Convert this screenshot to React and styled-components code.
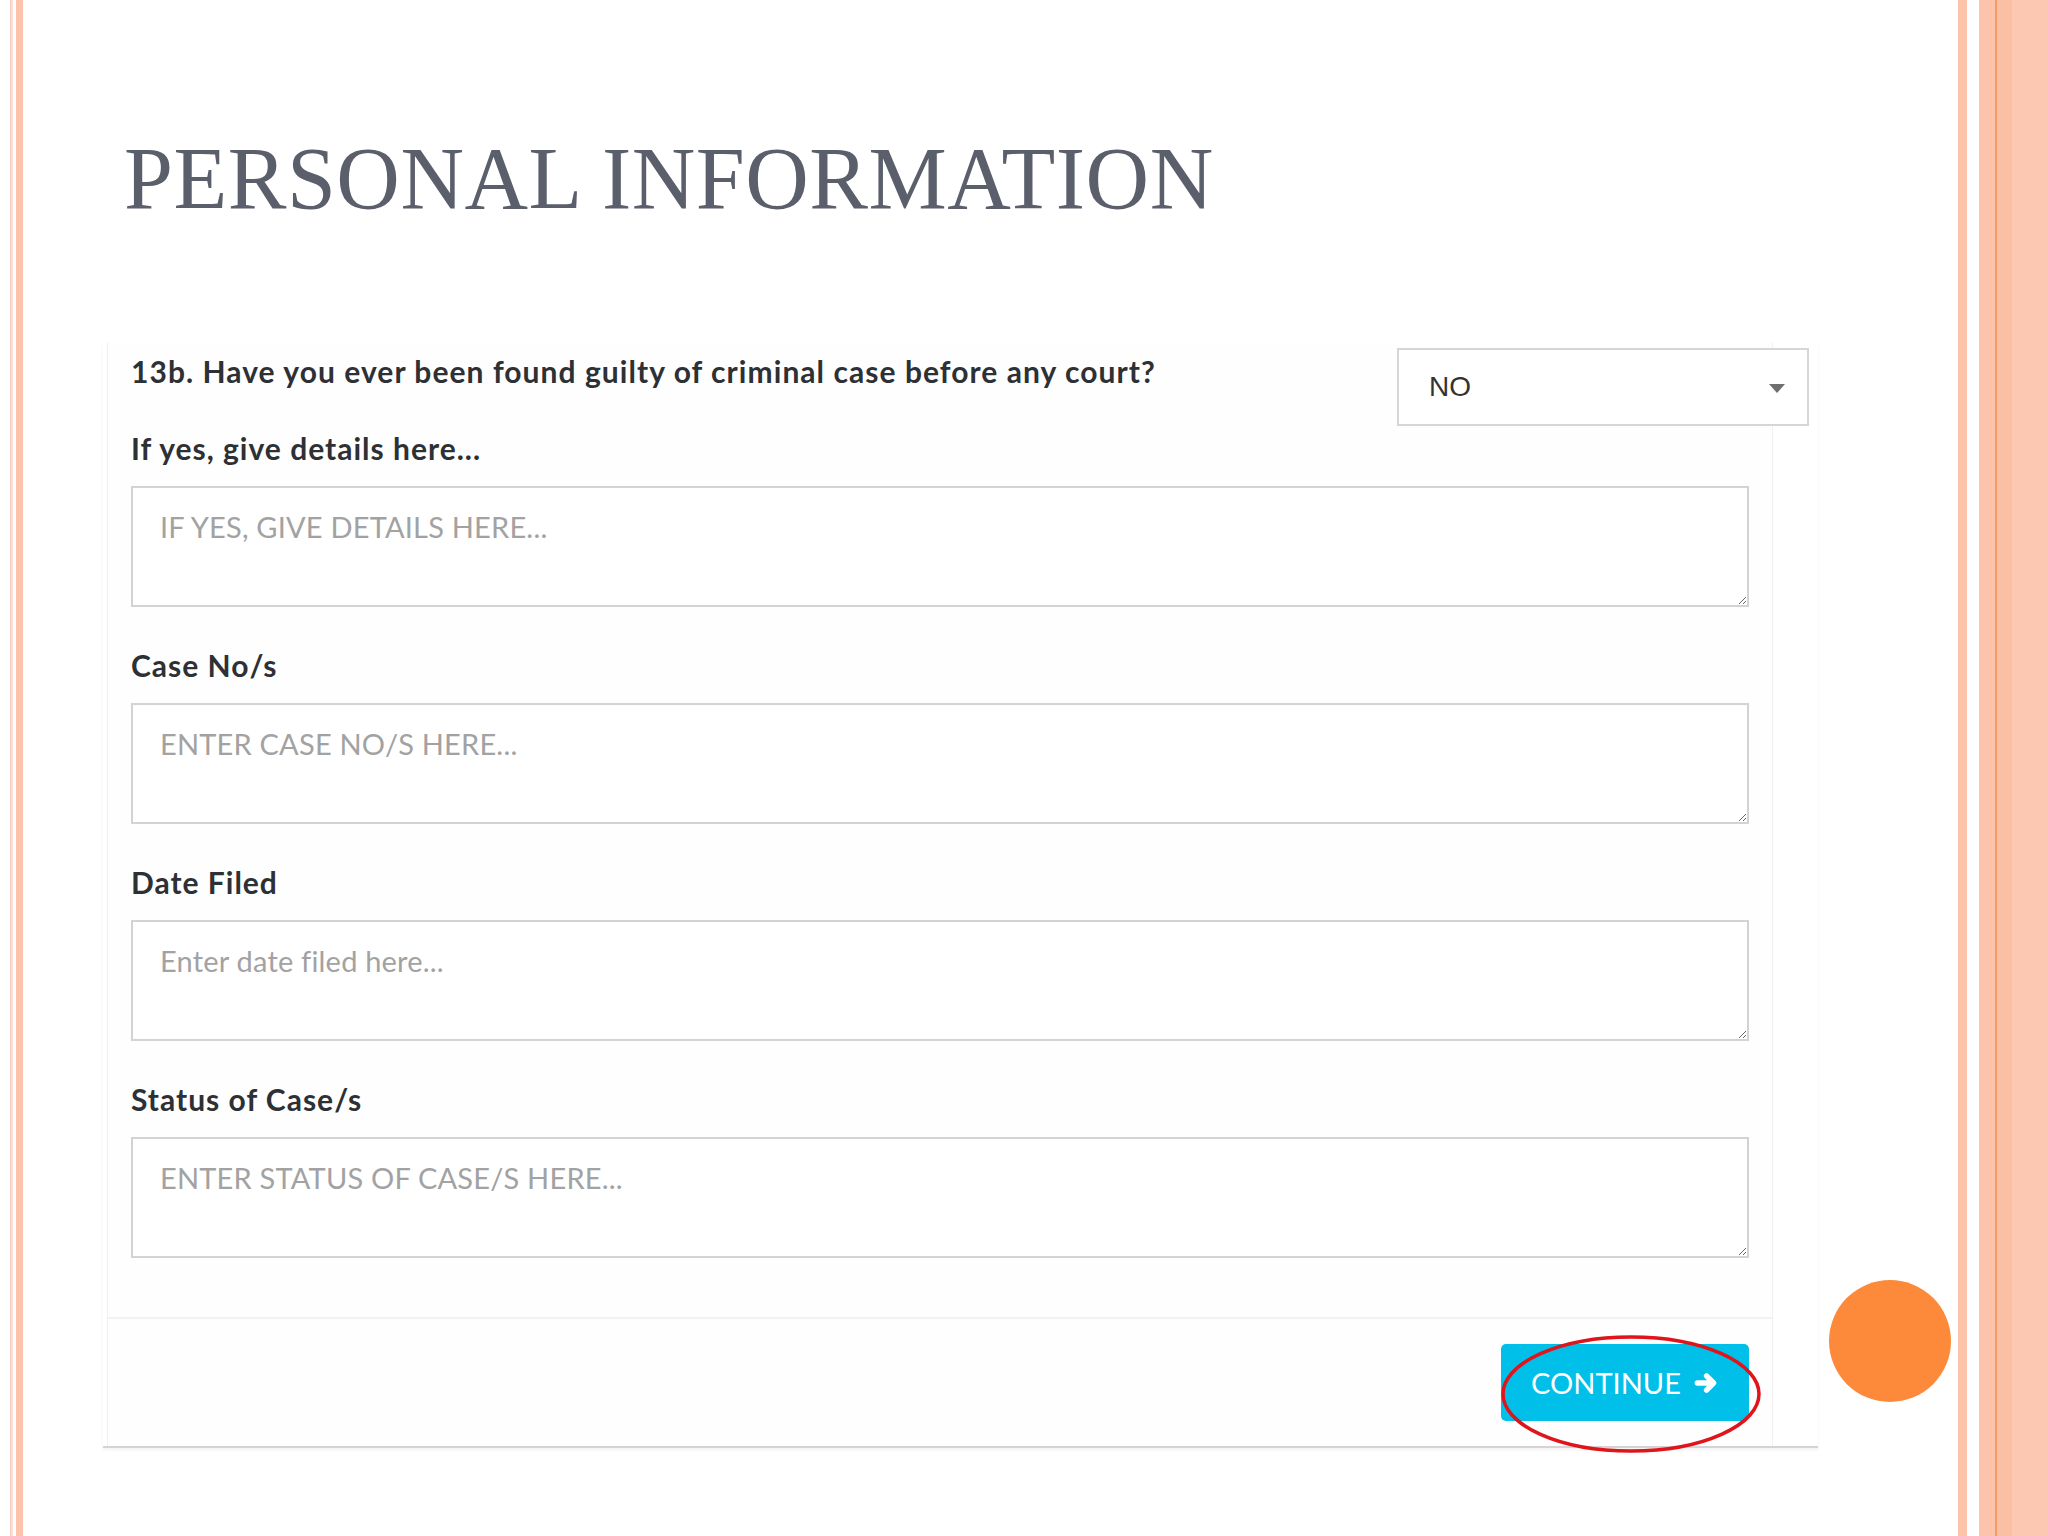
import React from 'react'
import styled, { createGlobalStyle } from 'styled-components'

const fields = [
  { label: 'If yes, give details here...', placeholder: 'IF YES, GIVE DETAILS HERE...' },
  { label: 'Case No/s', placeholder: 'ENTER CASE NO/S HERE...' },
  { label: 'Date Filed', placeholder: 'Enter date filed here...' },
  { label: 'Status of Case/s', placeholder: 'ENTER STATUS OF CASE/S HERE...' },
]

const ArrowIcon = () => (
  <svg width="26" height="26" viewBox="0 0 24 24" fill="none" stroke="currentColor"
    strokeWidth="5" strokeLinecap="round" strokeLinejoin="round">
    <path d="M4 12h14" />
    <path d="M12.5 5.5L19 12l-6.5 6.5" />
  </svg>
)

const App = () => {
  return (
    <>
      <GlobalStyle />
      <Slide>
        <LeftEdge />
        <Main>
          <Title>PERSONAL INFORMATION</Title>

          <FormCard>
            <Panel>
              <QuestionRow>
                <Question>13b. Have you ever been found guilty of criminal case before any court?</Question>
                <SelectBox>
                  <span>NO</span>
                  <Caret />
                </SelectBox>
              </QuestionRow>

              <FieldList>
                {fields.map((f) => (
                  <Field key={f.label}>
                    <Label>{f.label}</Label>
                    <TextArea placeholder={f.placeholder} />
                  </Field>
                ))}
              </FieldList>

              <Footer>
                <ButtonWrap>
                  <ContinueButton type="button">
                    CONTINUE <ArrowIcon />
                  </ContinueButton>
                  <Circled viewBox="0 0 262 120">
                    <ellipse cx="131" cy="60" rx="128" ry="57" />
                  </Circled>
                </ButtonWrap>
              </Footer>
            </Panel>
          </FormCard>
        </Main>
        <RightEdge />
        <Dot />
      </Slide>
    </>
  )
}

const GlobalStyle = createGlobalStyle`
  html, body {
    margin: 0;
    padding: 0;
    background: #fff;
  }
  * {
    box-sizing: border-box;
  }
`

const Slide = styled.div`
  position: relative;
  display: flex;
  width: 2048px;
  height: 1536px;
  overflow: hidden;
  background: #fff;
`

const LeftEdge = styled.div`
  width: 24px;
  flex-shrink: 0;
  background: linear-gradient(
    to right,
    #fff 0 10px,
    #f6cbbd 10px 11px,
    #fbded4 11px 13px,
    #fff 13px 16px,
    #fdc3aa 16px 23px,
    #fff 23px
  );
`

const RightEdge = styled.div`
  width: 90px;
  flex-shrink: 0;
  background: linear-gradient(
    to right,
    #fdc4ab 0 9px,
    #fff 9px 21px,
    #fdc4ab 21px 37px,
    #f59b68 37px 39px,
    #fbbfa4 39px 54px,
    #fcc8b2 54px 90px
  );
`

const Main = styled.div`
  flex: 1;
  padding-top: 135px;
`

const Title = styled.h1`
  margin: 0;
  padding-left: 100px;
  font-family: "Liberation Serif", "Times New Roman", serif;
  font-weight: 400;
  font-size: 88px;
  line-height: 1;
  color: #5a5f6b;
  letter-spacing: 0.5px;
`

const FormCard = styled.div`
  margin-top: 120px;
  margin-left: 79px;
  width: 1715px;
  border-bottom: 2px solid #d4d4d4;
  box-shadow: 0 2px 3px rgba(0, 0, 0, 0.05);
`

const Panel = styled.div`
  margin-left: 4px;
  width: 1666px;
  padding: 5px 23px 0 23px;
  border-left: 1px solid #f1f1f1;
  border-right: 1px solid #f1f1f1;
  background: #fefefe;
  font-family: Lato, "Open Sans", sans-serif;
`

const QuestionRow = styled.div`
  display: flex;
  justify-content: space-between;
  align-items: flex-start;
  margin-right: -60px;
`

const Question = styled.div`
  margin-top: 5px;
  font-size: 30px;
  font-weight: 700;
  line-height: 36px;
  letter-spacing: 1.05px;
  color: #2d3035;
`

const SelectBox = styled.div`
  width: 412px;
  height: 78px;
  display: flex;
  align-items: center;
  justify-content: space-between;
  padding: 0 22px 0 30px;
  border: 2px solid #d6d6d6;
  background: #fff;
  font-family: "Liberation Sans", Arial, sans-serif;
  font-size: 28px;
  color: #333;
`

const Caret = styled.span`
  width: 0;
  height: 0;
  margin-top: 2px;
  border-left: 8px solid transparent;
  border-right: 8px solid transparent;
  border-top: 9px solid #6f6f6f;
`

const FieldList = styled.div`
  display: flex;
  flex-direction: column;
  gap: 40px;
  margin-top: 4px;
  padding-bottom: 59px;
`

const Field = styled.div`
  display: flex;
  flex-direction: column;
`

const Label = styled.label`
  font-size: 30px;
  font-weight: 700;
  line-height: 36px;
  letter-spacing: 1px;
  margin-bottom: 20px;
  color: #2d3035;
`

const TextArea = styled.textarea`
  width: 100%;
  height: 121px;
  padding: 22px 27px;
  border: 2px solid #d3d3d3;
  border-radius: 0;
  background: #fff;
  font-family: Lato, "Open Sans", sans-serif;
  font-size: 29px;
  line-height: 1.2;
  letter-spacing: 0.2px;
  color: #555;
  outline: none;

  &::placeholder {
    color: #a2a2a2;
  }
`

const Footer = styled.div`
  margin: 0 -23px;
  padding: 0 23px;
  height: 129px;
  display: flex;
  align-items: center;
  justify-content: flex-end;
  border-top: 2px solid #f2f2f2;
`

const ButtonWrap = styled.div`
  position: relative;
`

const ContinueButton = styled.button`
  width: 248px;
  height: 77px;
  display: flex;
  align-items: center;
  justify-content: center;
  gap: 12px;
  border: none;
  border-radius: 5px;
  background: #00bfe8;
  color: #fff;
  font-family: Lato, "Open Sans", sans-serif;
  font-size: 29px;
  font-weight: 400;
  cursor: pointer;
`

const Circled = styled.svg`
  position: absolute;
  left: -1px;
  top: -10px;
  width: 262px;
  height: 120px;
  pointer-events: none;

  ellipse {
    fill: none;
    stroke: #e0141b;
    stroke-width: 3.5;
  }
`

const Dot = styled.div`
  position: absolute;
  left: 1829px;
  top: 1280px;
  width: 122px;
  height: 122px;
  border-radius: 50%;
  background: #fd8a3b;
`

export default App
